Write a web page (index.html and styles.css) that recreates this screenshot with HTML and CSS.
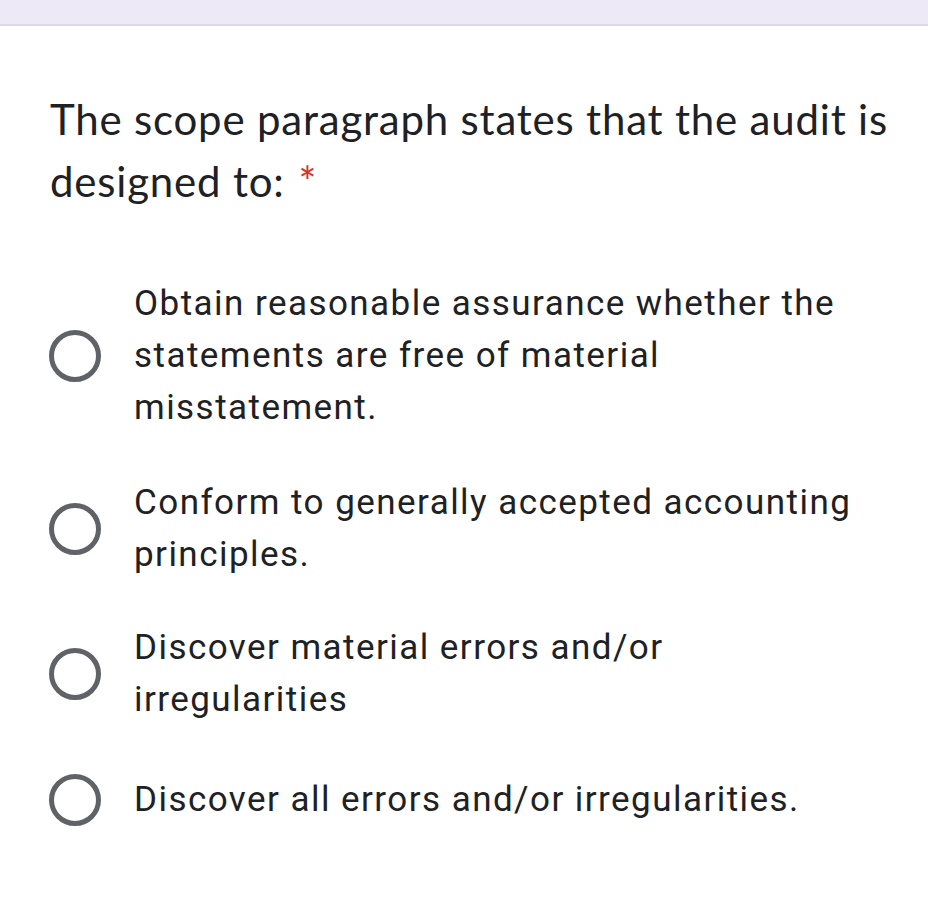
FILE: index.html
```html
<!DOCTYPE html>
<html>
<head>
<meta charset="utf-8">
<link rel="stylesheet" href="styles.css">
</head>
<body>
<div class="topbar"></div>
<div class="question">
  <div class="title">The scope paragraph states that the audit is designed to:<span class="req">*</span></div>
  <div class="options">
    <div class="option o1">
      <span class="radio"></span>
      <span class="label">Obtain reasonable assurance whether the statements are free of material misstatement.</span>
    </div>
    <div class="option o2">
      <span class="radio"></span>
      <span class="label">Conform to generally accepted accounting principles.</span>
    </div>
    <div class="option o3">
      <span class="radio"></span>
      <span class="label">Discover material errors and/or irregularities</span>
    </div>
    <div class="option o4">
      <span class="radio"></span>
      <span class="label">Discover all errors and/or irregularities.</span>
    </div>
  </div>
</div>
</body>
</html>
```

FILE: styles.css
```css
html, body {
  margin: 0;
  padding: 0;
  background: #ffffff;
}
.topbar {
  height: 24px;
  background: #ede9f7;
  border-bottom: 2px solid #dcd8e4;
}
.question {
  padding: 62px 20px 0 50px;
}
.title {
  font-family: Lato, "Open Sans", sans-serif;
  font-size: 42px;
  line-height: 62px;
  color: #202124;
  letter-spacing: 0.8px;
}
.req {
  color: #d93025;
  margin-left: 14px;
}
.options {
  margin-top: 66px;
  display: flex;
  flex-direction: column;
}
.option {
  display: flex;
  align-items: center;
}
.o2 { margin-top: 43px; }
.o3 { margin-top: 41px; }
.o4 { margin-top: 48px; }
.radio {
  flex: none;
  width: 42px;
  height: 42px;
  border: 5px solid #5f6368;
  border-radius: 50%;
  margin-left: -1px;
  margin-right: 33px;
}
.label {
  font-family: Roboto, sans-serif;
  font-size: 35px;
  line-height: 52px;
  letter-spacing: 1.45px;
  color: #202124;
  max-width: 740px;
}
```
